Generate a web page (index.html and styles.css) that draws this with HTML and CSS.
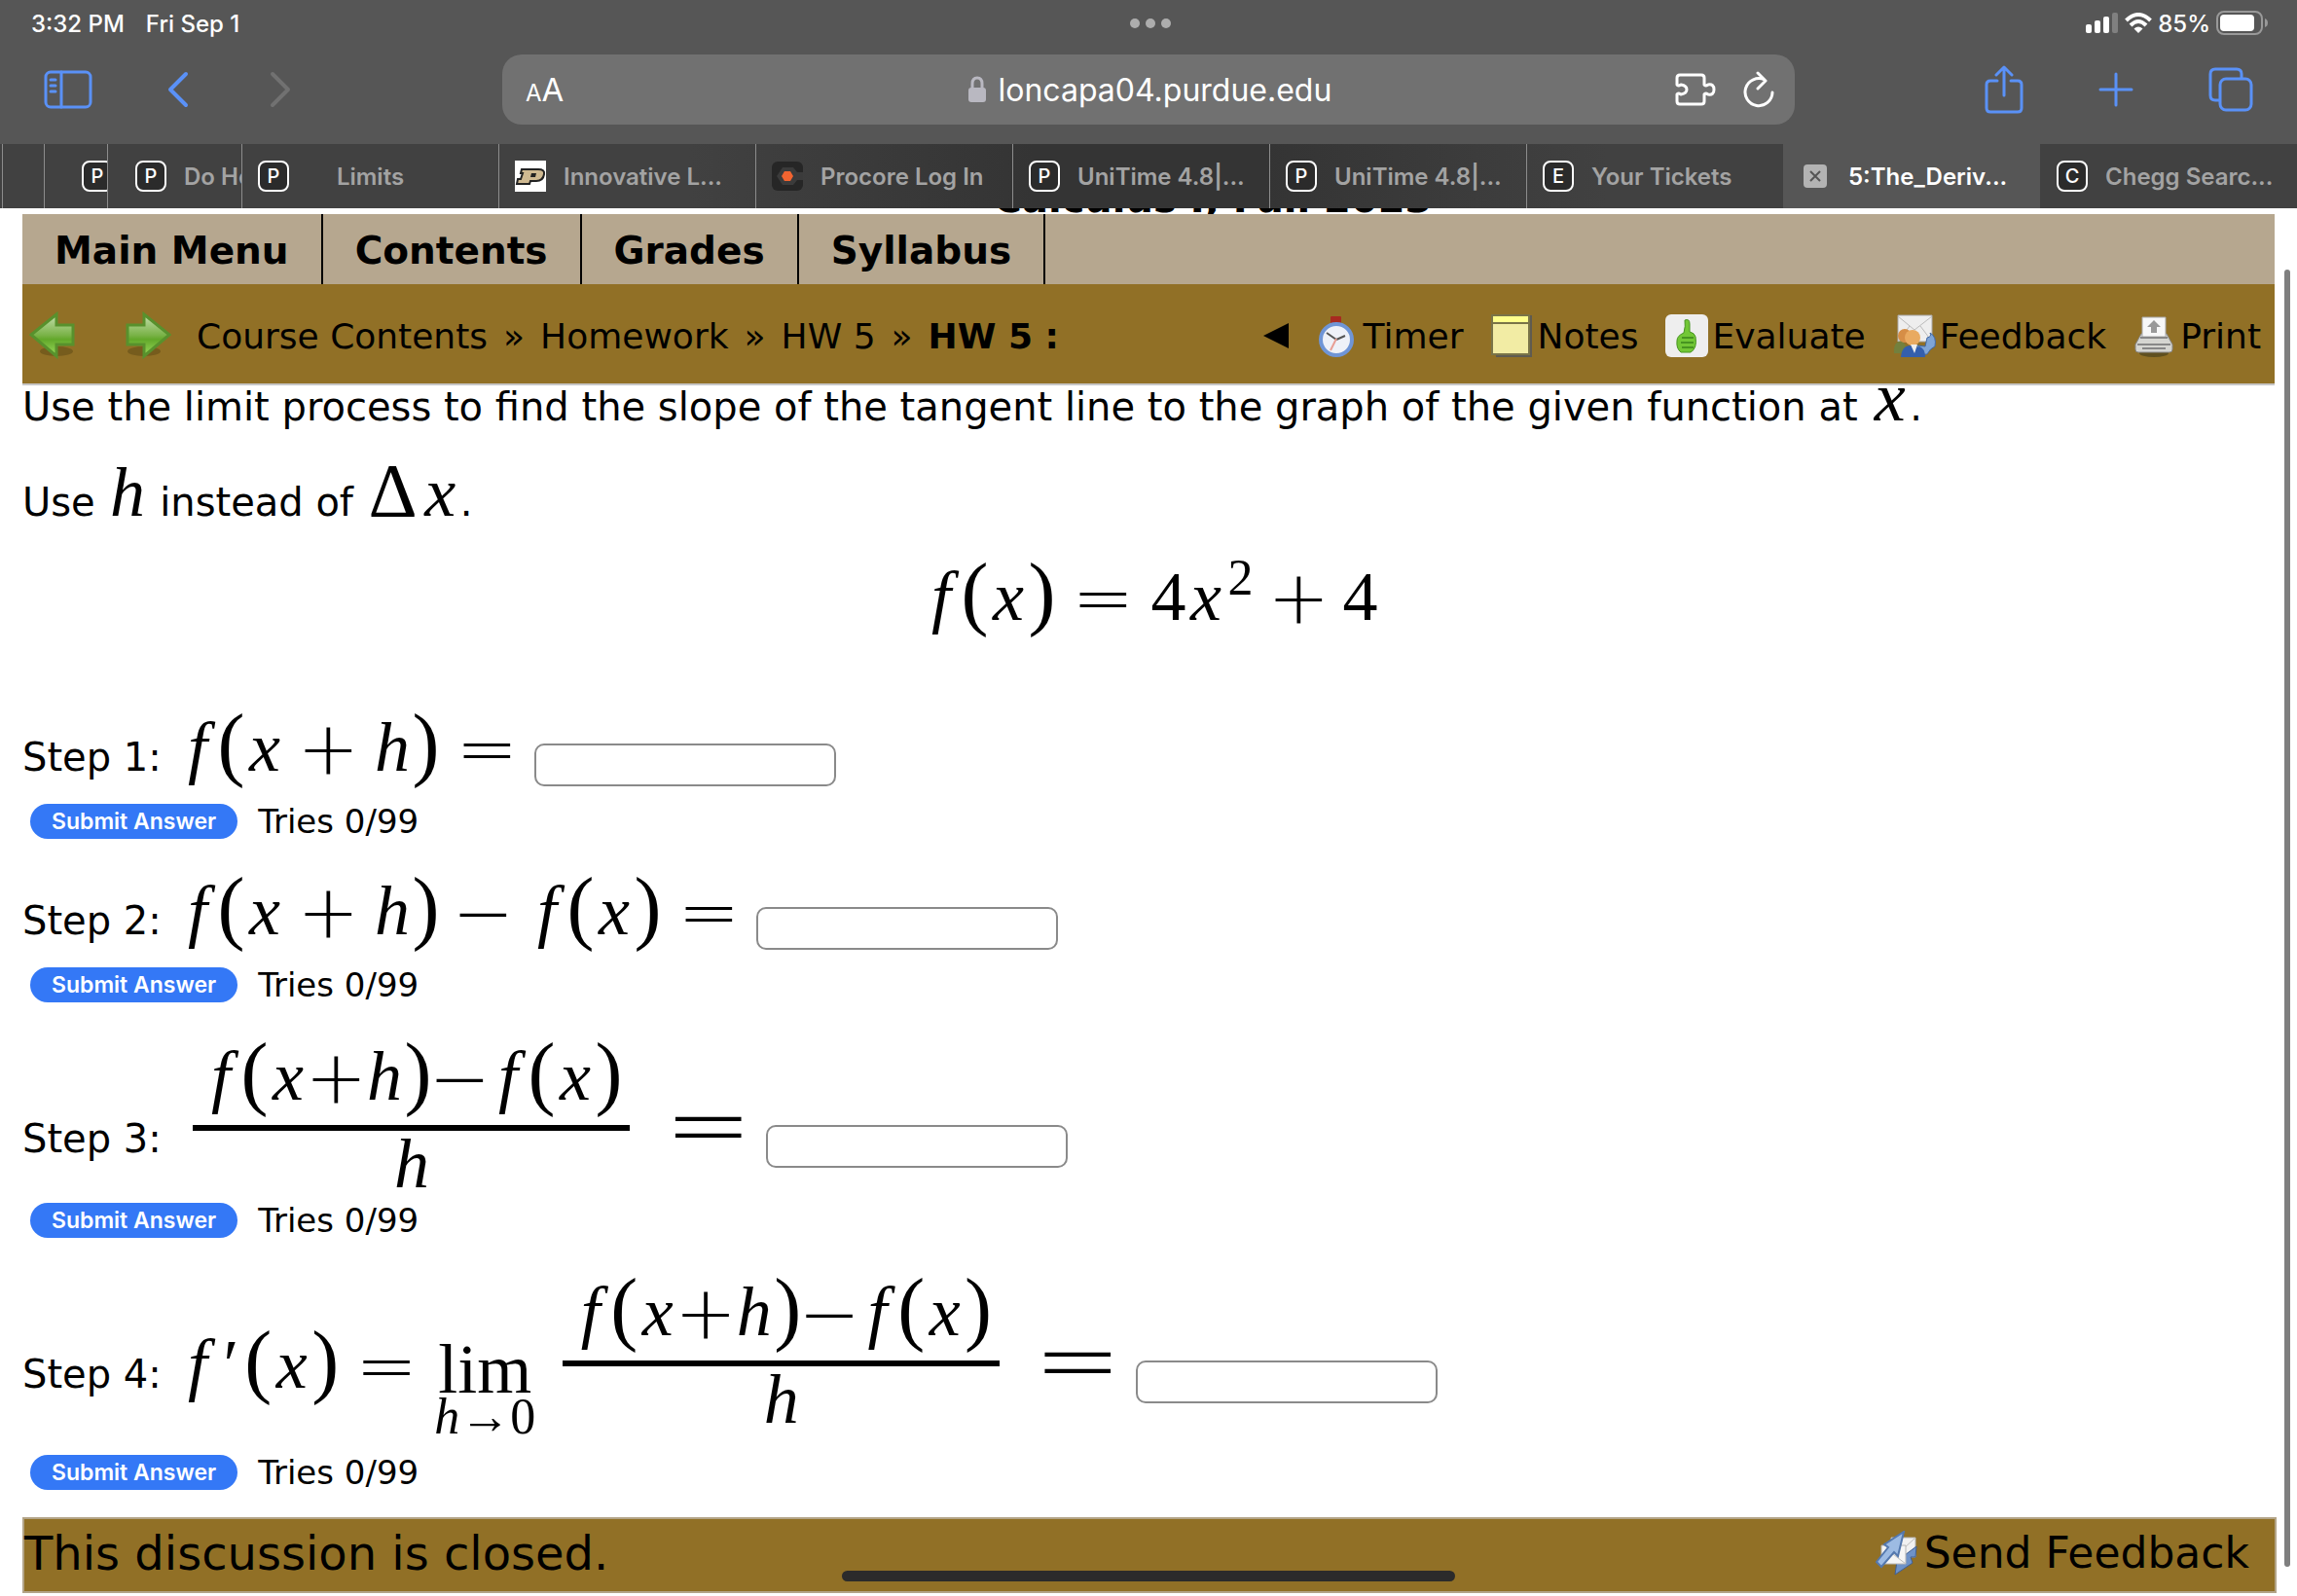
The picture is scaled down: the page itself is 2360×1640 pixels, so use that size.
FILE: index.html
```html
<!DOCTYPE html>
<html lang="en">
<head>
  <meta charset="utf-8">
  <title>5:The_Derivative HW 5</title>
  <link rel="stylesheet" href="styles.css">
</head>
<body>
<header class="browser">
  <div class="status">
    <div class="status-side"><span>3:32 PM</span><span>Fri Sep 1</span></div>
    <div class="dots"><i></i><i></i><i></i></div>
    <div class="status-side status-right">
      <svg width="34" height="22" viewBox="0 0 34 22" fill="#fff"><rect x="0" y="12" width="6" height="9" rx="2"/><rect x="9" y="8" width="6" height="13" rx="2"/><rect x="18" y="4" width="6" height="17" rx="2"/><rect x="27" y="0" width="6" height="21" rx="2" fill="#808080"/></svg>
      <svg width="28" height="22" viewBox="0 0 28 22" fill="none" stroke="#fff" stroke-width="4"><path d="M1.500 8Q14-4 26.500 8M6 13Q14 5 22 13"/><path d="M14 21L9.500 16.500Q14 12.500 18.500 16.500Z" fill="#fff" stroke="none"/></svg>
      <span>85%</span>
      <svg width="54" height="26" viewBox="0 0 54 26"><rect x="1" y="1" width="46" height="23" rx="7" fill="none" stroke="#999" stroke-width="2"/><rect x="4" y="4" width="35" height="17" rx="4" fill="#fff"/><path d="M50 8q3 1 3 4.500t-3 4.500z" fill="#999"/></svg>
    </div>
  </div>

  <div class="toolbar">
    <div class="tools tools-left">
      <button aria-label="Sidebar"><svg width="50" height="40" viewBox="0 0 50 40" fill="none" stroke="#5a91f7" stroke-width="3" stroke-linecap="round"><rect x="2" y="2" width="46" height="36" rx="5"/><path d="M18 2v36M7 10h5M7 16h5M7 22h5"/></svg></button>
      <button aria-label="Back"><svg width="22" height="38" viewBox="0 0 22 38" fill="none" stroke="#5a91f7" stroke-width="4" stroke-linecap="round" stroke-linejoin="round"><path d="M19 3L3 19l16 16"/></svg></button>
      <button aria-label="Forward"><svg width="22" height="38" viewBox="0 0 22 38" fill="none" stroke="#717171" stroke-width="4" stroke-linecap="round" stroke-linejoin="round"><path d="M3 3l16 16L3 35"/></svg></button>
    </div>
    <div class="address">
      <button class="text-size" aria-label="Text size"><small>A</small>A</button>
      <div class="location">
        <svg width="20" height="28" viewBox="0 0 20 28"><path d="M5 13V8q0-6 5-6t5 6v5" fill="none" stroke="#b9b8c1" stroke-width="3"/><rect x="1" y="12" width="18" height="15" rx="3" fill="#b9b8c1"/></svg>
        <input type="text" value="loncapa04.purdue.edu" aria-label="Address">
      </div>
      <div class="address-tools">
        <button aria-label="Extensions"><svg width="42" height="34" viewBox="0 0 42 34" fill="none" stroke="#fff" stroke-width="3" stroke-linejoin="round"><path d="M2 12V5q0-3 3-3h22q3 0 3 3v7q1 2 4 0 6-1 6 5t-6 5q-3-2-4 0v7q0 3-3 3H5q-3 0-3-3v-7q1-2 4 0 6-1 6-5t-6-5q-3 2-4 0z"/></svg></button>
        <button aria-label="Reload"><svg width="32" height="38" viewBox="0 0 32 38" fill="none" stroke="#fff" stroke-width="3" stroke-linecap="round" stroke-linejoin="round"><path d="M22 9A14 14 0 1 0 30 22M15 2l8 8-8 8"/></svg></button>
      </div>
    </div>
    <div class="tools tools-right">
      <button aria-label="Share"><svg width="40" height="50" viewBox="0 0 40 50" fill="none" stroke="#5a91f7" stroke-width="3" stroke-linecap="round" stroke-linejoin="round"><path d="M13 16H6q-4 0-4 4v24q0 4 4 4h28q4 0 4-4V20q0-4-4-4h-7M20 31V3M12 10l8-8 8 8"/></svg></button>
      <button aria-label="New tab"><svg width="36" height="36" viewBox="0 0 36 36" stroke="#5a91f7" stroke-width="3" stroke-linecap="round"><path d="M18 2v32M2 18h32"/></svg></button>
      <button aria-label="Tab overview"><svg width="46" height="46" viewBox="0 0 46 46" fill="none" stroke="#5a91f7" stroke-width="3"><rect x="12" y="12" width="32" height="32" rx="6"/><path d="M12 34H7q-5 0-5-5V7q0-5 5-5h22q5 0 5 5v5"/></svg></button>
    </div>
  </div>

  <nav class="tabs">
    <a href="#" class="tab tab-edge"></a>
    <a href="#" class="tab tab-short"></a>
    <a href="#" class="tab tab-stub"><b class="favicon">P</b></a>
    <a href="#" class="tab tab-half"><b class="favicon">P</b>Do Ho</a>
    <a href="#" class="tab tab-centered"><b class="favicon">P</b><span>Limits</span></a>
    <a href="#" class="tab"><svg class="site" viewBox="0 0 32 32"><path fill="#fff" d="M0 0h32v32H0z"/><path d="M7 9h17q7 0 6 5-1 7-8 7h-6l-1 3H2l1-5h3l2-6H6z" fill="#cfb991" stroke="#222" stroke-width="2"/><path d="M17 13h5l-1 4h-5z" fill="#222"/></svg>Innovative L...</a>
    <a href="#" class="tab"><svg class="site" viewBox="0 0 32 32"><rect y="1" width="32" height="30" rx="6" fill="#262626"/><path d="M11 7h11l4 5h6v8h-6l-4 5H11l-6-9z" fill="#3b3b3b"/><path d="M13 11h6l3 5-3 5h-6l-3-5z" fill="#f26430"/></svg>Procore Log In</a>
    <a href="#" class="tab"><b class="favicon">P</b>UniTime 4.8|...</a>
    <a href="#" class="tab"><b class="favicon">P</b>UniTime 4.8|...</a>
    <a href="#" class="tab"><b class="favicon">E</b>Your Tickets</a>
    <a href="#" class="tab active"><svg class="close" viewBox="0 0 24 24"><rect width="24" height="24" rx="4" fill="#b3b3b3"/><path d="M7 7l10 10M17 7L7 17" stroke="#555" stroke-width="2"/></svg>5:The_Deriv...</a>
    <a href="#" class="tab"><b class="favicon">C</b>Chegg Searc...</a>
  </nav>
</header>

<main class="page">
  <div class="course-title"><span>Calculus I, Fall 2023</span></div>

  <nav class="menu">
    <a href="#">Main Menu</a>
    <a href="#">Contents</a>
    <a href="#">Grades</a>
    <a href="#">Syllabus</a>
  </nav>

  <div class="crumbs">
    <a href="#" class="arrow" aria-label="Previous"><svg width="48" height="50" viewBox="0 0 48 50"><defs><linearGradient id="green" x2="0" y2="1"><stop offset="0" stop-color="#c5dfae"/><stop offset=".5" stop-color="#79b247"/><stop offset=".6" stop-color="#62a82a"/><stop offset="1" stop-color="#9bdb5d"/></linearGradient></defs><ellipse cx="28" cy="41" rx="17" ry="5" fill="#765c1d"/><path d="M2 24L28 3v11h17v20H28v12z" fill="url(#green)" stroke="#58912d" stroke-width="3"/></svg></a>
    <a href="#" class="arrow" aria-label="Next"><svg width="48" height="50" viewBox="0 0 48 50"><ellipse cx="20" cy="41" rx="17" ry="5" fill="#765c1d"/><path d="M46 24L20 3v11H3v20h17v12z" fill="url(#green)" stroke="#58912d" stroke-width="3"/></svg></a>
    <div class="trail"><a href="#">Course Contents</a><span>»</span><a href="#">Homework</a><span>»</span><a href="#">HW 5</a><span>»</span><b>HW 5 :</b></div>
    <div class="functions">
      <a href="#" aria-label="Collapse"><svg width="28" height="28" viewBox="0 0 28 28"><path d="M1 14L27 1v26z"/></svg></a>
      <a href="#"><svg width="44" height="44" viewBox="0 0 44 44"><rect x="14" y="2" width="11" height="8" rx="1" fill="#a82a20"/><circle cx="20" cy="26" r="16" fill="#eef1f8" stroke="#6f95d6" stroke-width="4"/><path d="M20 26l-10-7M20 26l9-4" stroke="#555" stroke-width="2"/><path d="M20 25l-6 12" stroke="#e89e94" stroke-width="2"/></svg>Timer</a>
      <a href="#"><svg width="44" height="44" viewBox="0 0 44 44"><path d="M3 1h40v43H6z" fill="#5f5b50"/><path d="M3 2h36v38H3z" fill="#f2eca4"/><path d="M3 2h36v6H3z" fill="#ffff8c"/><path d="M2 1h38v40H2zM2 9h38" fill="none" stroke="#7a7448" stroke-width="2"/></svg>Notes</a>
      <a href="#"><svg width="44" height="44" viewBox="0 0 44 44"><rect width="44" height="44" rx="6" fill="#eee"/><path d="M20 6q5-2 5 4v8q5 1 6 5 2 12-5 16H16q-5-4-4-12 0-5 7-8 2-7 1-13z" fill="#72c736" stroke="#479421"/><path d="M17 24h12M16 29h13M17 34h12" stroke="#479421" stroke-width="2"/></svg>Evaluate</a>
      <a href="#"><svg width="44" height="44" viewBox="0 0 44 44"><path d="M5 1h35v27H5z" fill="#eee" stroke="#a9a9a9"/><path d="M5 2l17 14L40 2M5 28l12-16M40 28L28 12" fill="none" stroke="#bbb"/><path d="M1 40q-1-12 8-13l10 13z" fill="#73803d"/><path d="M35 24q5-1 3-5 7 4 5 14-5 2-8 8l-12 1 2-10 8 1z" fill="#7fa5d6" stroke="#3f68a5"/><circle cx="12" cy="22" r="7" fill="#d68e46"/><circle cx="20" cy="24" r="8" fill="#e9aa60"/><path d="M8 44q1-12 10-12l4 3 5-2q6 2 6 11z" fill="#345fac"/><path d="M18 31l4 9 3-9z" fill="#eee"/></svg>Feedback</a>
      <a href="#"><svg width="44" height="44" viewBox="0 0 44 44"><ellipse cx="21" cy="40" rx="15" ry="4" fill="#60501f"/><path d="M8 20h26l6 11v5q0 3-3 3H5q-3 0-3-3v-5z" fill="#d5d5d1" stroke="#888"/><path d="M9 3h24v20H9z" fill="#f7f7f7" stroke="#aaa"/><path d="M21 6l7 7h-4v6h-6v-6h-4z" fill="#999"/><path d="M7 24h28M4 31h34M9 35h24" stroke="#888" stroke-width="2"/></svg>Print</a>
    </div>
  </div>

  <section class="problem">
    <p>Use the limit process to find the slope of the tangent line to the graph of the given function at <span class="math"><i>x</i></span>.</p>
    <p>Use <span class="math"><i>h</i></span> instead of <span class="math"><span class="delta">Δ</span><i>x</i></span>.</p>
    <div class="equation"><span class="math"><i>f</i><b>(</b><i>x</i><b>)</b><span class="rel">=</span>4<i>x</i><sup>2</sup><span class="bin">+</span>4</span></div>

    <form>
      <div class="step">
        <label for="step1">Step 1: <span class="math"><i>f</i><b>(</b><i>x</i><span class="bin">+</span><i>h</i><b>)</b><span class="rel">=</span></span></label><input type="text" id="step1" name="step1">
      </div>
      <div class="submit"><button type="submit">Submit Answer</button>Tries 0/99</div>

      <div class="step">
        <label for="step2">Step 2: <span class="math"><i>f</i><b>(</b><i>x</i><span class="bin">+</span><i>h</i><b>)</b><span class="bin">−</span><i>f</i><b>(</b><i>x</i><b>)</b><span class="rel">=</span></span></label><input type="text" id="step2" name="step2">
      </div>
      <div class="submit"><button type="submit">Submit Answer</button>Tries 0/99</div>

      <div class="step">
        <label for="step3">Step 3: <span class="math"><span class="frac"><span class="num"><i>f</i><b>(</b><i>x</i><span class="op">+</span><i>h</i><b>)</b><span class="op">−</span><i>f</i><b>(</b><i>x</i><b>)</b></span><span class="den"><i>h</i></span></span><span class="big">=</span></span></label><input type="text" id="step3" name="step3">
      </div>
      <div class="submit"><button type="submit">Submit Answer</button>Tries 0/99</div>

      <div class="step">
        <label for="step4">Step 4: <span class="math"><i>f</i><span class="prime">′</span><b>(</b><i>x</i><b>)</b><span class="rel">=</span><span class="limit"><span>lim</span><span class="under"><em>h</em>→0</span></span><span class="frac"><span class="num"><i>f</i><b>(</b><i>x</i><span class="op">+</span><i>h</i><b>)</b><span class="op">−</span><i>f</i><b>(</b><i>x</i><b>)</b></span><span class="den"><i>h</i></span></span><span class="big">=</span></span></label><input type="text" id="step4" name="step4">
      </div>
      <div class="submit"><button type="submit">Submit Answer</button>Tries 0/99</div>
    </form>
  </section>

  <footer class="discussion">
    <span>This discussion is closed.</span>
    <a href="#"><svg width="44" height="46" viewBox="0 0 44 46"><path d="M16 7h25v20H16z" fill="#f1f1f1" stroke="#b5b5b5"/><path d="M17 8l12 10L40 8" fill="none" stroke="#bbb"/><path d="M42 16l-1 11h-5l2 6-18 12 2-14z" fill="#6e92c8" stroke="#3f5f92"/><path d="M6 15h25v19H6z" fill="#f5f5f5" stroke="#b5b5b5"/><path d="M6 34l12-10 13 10" fill="none" stroke="#bbb"/><path d="M29 1l-6 25-4-4L6 37l-5-5 12-15-4-3z" fill="#9dbbe3" stroke="#5478ae" stroke-width="2"/></svg>Send Feedback</a>
  </footer>
</main>

<div class="scroll-thumb"></div>
<div class="home-bar"></div>
</body>
</html>
```

FILE: styles.css
```css
* {
  box-sizing: border-box;
}

body {
  margin: 0;
  background: #fff;
  color: #000;
  font-family: Verdana, "DejaVu Sans", sans-serif;
  font-size: 40px;
}

a {
  color: inherit;
  text-decoration: none;
}

button {
  padding: 0;
  border: 0;
  background: none;
  color: inherit;
  font: inherit;
}

svg {
  display: block;
  flex: none;
}

/* browser bars */
.browser {
  background: #565656;
  color: #fff;
  font-family: Inter, sans-serif;
  font-size: 24px;
}

.status {
  display: flex;
  align-items: center;
  height: 48px;
  padding: 0 29px 0 32px;
  font-weight: 500;
}

.status-side {
  display: flex;
  flex: 1;
  align-items: center;
  gap: 22px;
}

.status-right {
  justify-content: flex-end;
  gap: 6px;
}

.dots {
  display: flex;
  gap: 6px;
}

.dots i {
  width: 10px;
  height: 10px;
  border-radius: 50%;
  background: #adadad;
}

.toolbar {
  display: grid;
  grid-template-columns: 1fr 1328px 1fr;
  align-items: center;
  height: 100px;
  padding: 0 45px 12px;
}

.tools {
  display: flex;
  align-items: center;
}

.tools-left {
  gap: 77px;
}

.tools-left button + button + button {
  margin-left: 6px;
}

.tools-right {
  justify-content: flex-end;
  gap: 77px;
}

.address {
  display: grid;
  grid-template-columns: 1fr auto 1fr;
  align-items: center;
  height: 72px;
  padding: 0 21px 0 24px;
  border-radius: 20px;
  background: #717171;
}

.text-size {
  justify-self: start;
  font-size: 33px;
}

.text-size small {
  font-size: 24px;
}

.location {
  display: flex;
  align-items: center;
  gap: 12px;
}

.location input {
  width: 344px;
  padding: 0;
  border: 0;
  background: none;
  color: #fff;
  font: 32px Inter, sans-serif;
}

.address-tools {
  display: flex;
  align-items: center;
  justify-content: flex-end;
  gap: 28px;
}

.tabs {
  display: flex;
  height: 66px;
  background: linear-gradient(90deg, #414141 30%, #343434 45%, #343434 55%, #414141 70%);
  color: #a3a3a3;
  font-weight: 600;
}

.tab {
  display: flex;
  flex: 1 1 264px;
  align-items: center;
  gap: 18px;
  min-width: 0;
  padding-left: 16px;
  overflow: hidden;
  border-left: 1px solid #8c8c8c;
  white-space: nowrap;
}

.tab-edge,
.tab-short,
.tab-stub,
.tab-half {
  flex: none;
}

.tab-edge {
  width: 2px;
  border: 0;
  padding: 0;
}

.tab-short {
  width: 43px;
}

.tab-stub {
  width: 65px;
  padding-left: 38px;
}

.tab-half {
  width: 138px;
  padding-left: 28px;
}

.tab-centered {
  padding-right: 66px;
}

.tab-centered span {
  flex: 1;
  text-align: center;
}

.tab.active {
  gap: 22px;
  padding-left: 20px;
  border-color: #565656;
  background: #565656;
  color: #fff;
}

.tab.active + .tab {
  border-color: #414141;
}

.favicon {
  flex: none;
  width: 32px;
  height: 32px;
  border: 2px solid #fff;
  border-radius: 8px;
  background: #2b2b2b;
  color: #fff;
  font-size: 20px;
  font-weight: 500;
  line-height: 28px;
  text-align: center;
}

.site {
  width: 32px;
  height: 32px;
}

.close {
  width: 24px;
  height: 24px;
}

/* course page */
.page {
  padding: 0 21px 0 23px;
}

/* only the foot of the title shows under the tab bar */
.course-title {
  display: flex;
  align-items: flex-end;
  justify-content: center;
  height: 6px;
  overflow: hidden;
  padding-left: 130px;
  font-weight: bold;
  line-height: 32px;
}

.menu {
  display: flex;
  height: 72px;
  margin-right: 2px;
  background: #b6a78f;
  font-size: 39px;
  font-weight: bold;
  line-height: 76px;
}

.menu a {
  padding: 0 33px;
  border-right: 2px solid #000;
}

.crumbs {
  display: flex;
  align-items: center;
  height: 104px;
  margin-right: 2px;
  padding: 4px 14px 0 7px;
  border-bottom: 2px solid #c6c6c6;
  background: #917026;
  font-size: 36px;
  white-space: nowrap;
}

.arrow {
  margin-right: 50px;
}

.arrow + .arrow {
  margin-right: 26px;
}

.trail span {
  margin: 0 16px;
}

.functions {
  display: flex;
  gap: 28px;
  margin-left: auto;
}

.functions a {
  display: flex;
  align-items: center;
  gap: 4px;
}

.problem p {
  margin: 0 0 54px;
  line-height: 44px;
}

.problem p .math {
  line-height: 0;
}

.problem p + p {
  margin-bottom: 29px;
}

.equation {
  margin-bottom: 67px;
  text-align: center;
}

/* formulas */
.math {
  font-family: "Liberation Serif", serif;
  font-size: 72px;
  line-height: 84px;
}

.step .math {
  margin-left: 4px;
}

.math i,
.op,
.rel,
.bin,
.delta {
  display: inline-block;
  text-align: center;
}

.math i {
  width: 41px;
}

.math b {
  font-size: 84px;
  font-weight: normal;
}

.math sup {
  margin: 0 2px;
  font-size: 52px;
  line-height: 0;
  vertical-align: 26px;
}

.op,
.rel,
.bin {
  width: 58px;
  font-family: "DejaVu Sans", sans-serif;
  font-size: 76px;
  font-weight: 200;
  line-height: 64px;
  text-indent: -3px;
  vertical-align: -4px;
}

.rel {
  margin: 0 20px;
}

.bin {
  margin: 0 16px;
}

.delta {
  width: 56px;
  font-size: 78px;
}

.prime {
  margin: 0 6px;
}

.frac {
  display: inline-block;
  margin: 0 8px 0 16px;
  padding-top: 2px;
  text-align: center;
  vertical-align: -36px;
}

.num,
.den {
  display: block;
}

.num {
  padding: 0 8px 8px;
  border-bottom: 6px solid #000;
}

.den {
  padding-top: 10px;
  line-height: 48px;
}

.big {
  margin: 0 14px 0 27px;
  font-family: "DejaVu Sans", sans-serif;
  font-size: 108px;
  font-weight: 200;
  line-height: 64px;
  vertical-align: -8px;
}

.limit {
  display: inline-block;
  margin-right: 12px;
  text-align: center;
  vertical-align: -47px;
}

.limit span {
  display: block;
  line-height: 52px;
}

.limit .under {
  font-size: 52px;
  line-height: 46px;
}

/* answers */
.step {
  white-space: nowrap;
}

.step input {
  width: 310px;
  height: 44px;
  border: 2px solid #8a8a8a;
  border-radius: 10px;
  background: #fff;
  font-size: 20px;
}

.submit {
  display: flex;
  align-items: center;
  gap: 21px;
  height: 36px;
  margin: 16px 8px 28px;
  font-size: 34px;
}

.submit button {
  height: 36px;
  padding: 0 22px;
  border-radius: 18px;
  background: #3478f6;
  color: #fff;
  font: 600 23px Inter, sans-serif;
}

.discussion {
  display: flex;
  align-items: center;
  justify-content: space-between;
  height: 78px;
  padding: 0 26px 4px 0;
  border: 2px solid #b3a488;
  background: #917026;
  font-size: 48px;
  line-height: 64px;
}

.discussion a {
  display: flex;
  align-items: center;
  gap: 6px;
  font-size: 44px;
}

.scroll-thumb {
  position: absolute;
  top: 277px;
  right: 7px;
  bottom: 30px;
  width: 6px;
  border-radius: 3px;
  background: #7f7f7f;
}

.home-bar {
  position: absolute;
  bottom: 15px;
  left: 50%;
  width: 630px;
  height: 11px;
  margin-left: -315px;
  border-radius: 6px;
  background: #2b2b2b;
}
```
